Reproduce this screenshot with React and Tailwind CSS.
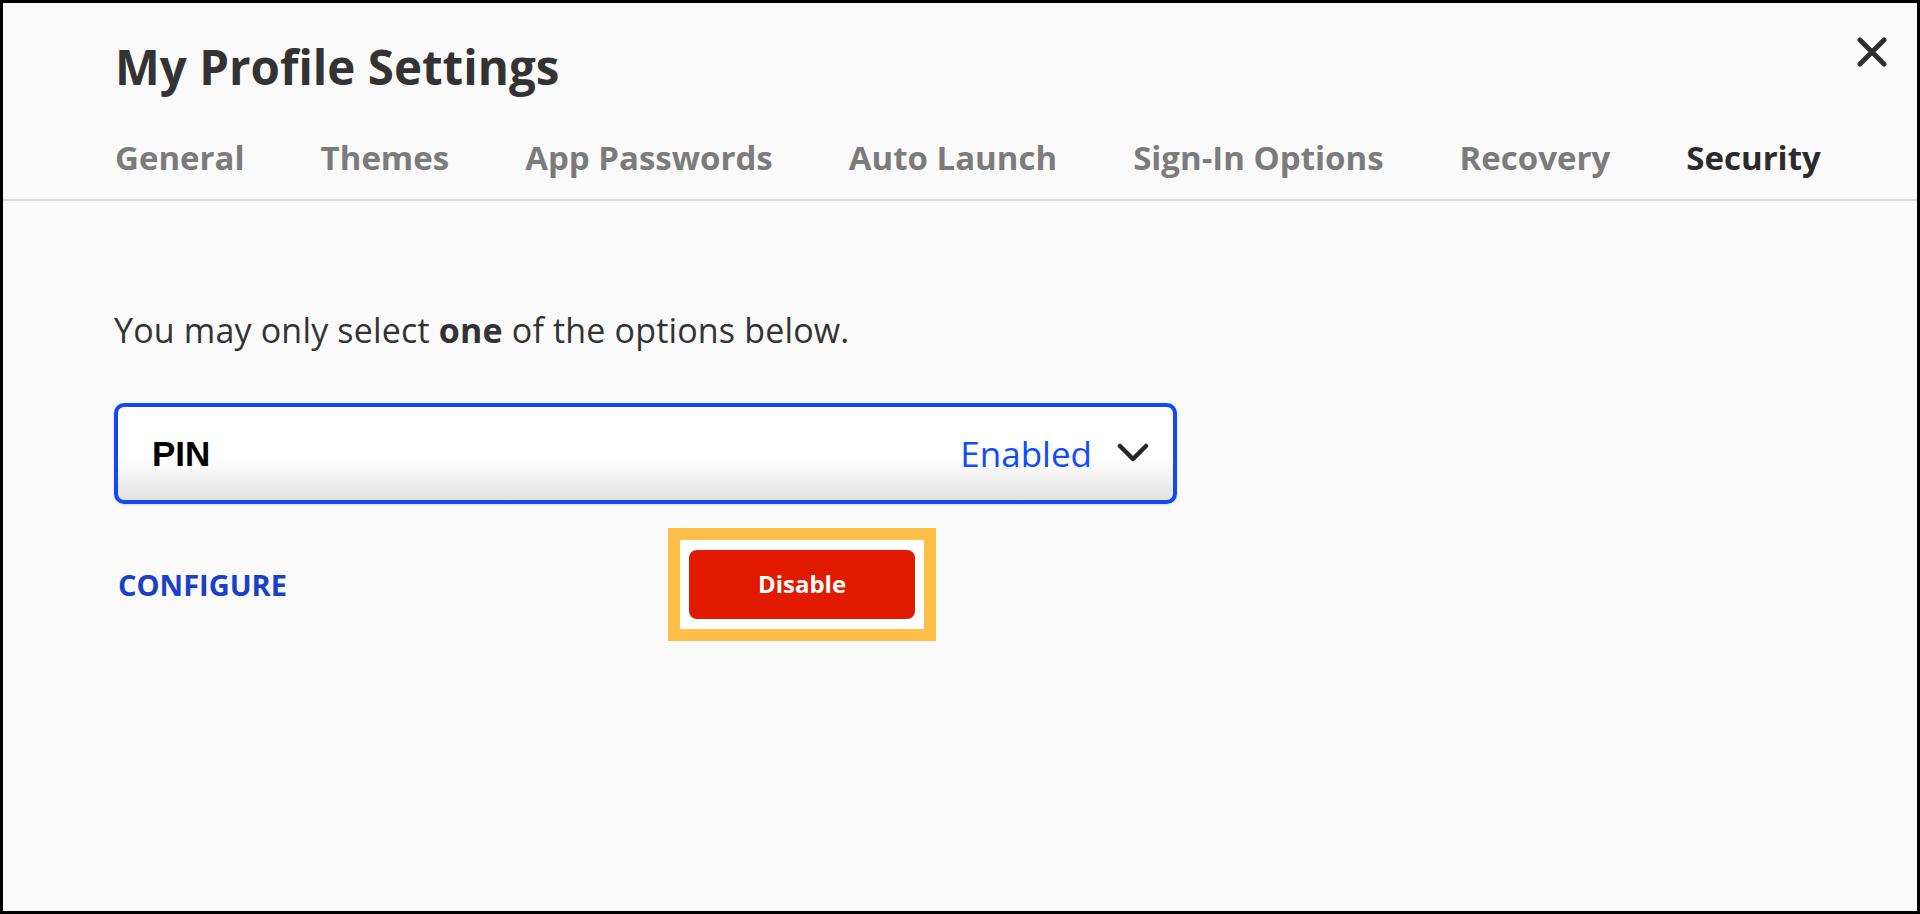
import React from "react";

const tabs = [
  "General",
  "Themes",
  "App Passwords",
  "Auto Launch",
  "Sign-In Options",
  "Recovery",
  "Security",
];

function CloseIcon() {
  return (
    <svg width="32" height="30" viewBox="0 0 32 30" fill="none">
      <path
        d="M4 3 L28 27 M28 3 L4 27"
        stroke="#2f2f2f"
        strokeWidth="5"
        strokeLinecap="round"
      />
    </svg>
  );
}

function Chevron() {
  return (
    <svg width="32" height="20" viewBox="0 0 32 20" fill="none">
      <path
        d="M3 3 L16 16 L29 3"
        stroke="#262626"
        strokeWidth="4.5"
        strokeLinecap="round"
        strokeLinejoin="round"
      />
    </svg>
  );
}

export default function App() {
  const active = "Security";

  return (
    <div className="relative flex h-[914px] w-full flex-col border-[3px] border-black bg-[#fafafa] font-['Open_Sans',sans-serif]">
      {/* Close */}
      <button className="absolute right-[29px] top-[34px]">
        <CloseIcon />
      </button>

      {/* Header */}
      <div className="border-b-2 border-[#d9d9d9] pl-[112px] pb-[25px]">
        <h1 className="mt-[40px] text-[47.5px] font-bold leading-none text-[#333333]">
          My Profile Settings
        </h1>
        <nav className="mt-[50px] flex gap-[76px]">
          {tabs.map((t) => (
            <span
              key={t}
              className={
                t === active
                  ? "text-[33px] font-bold leading-none text-[#2b2b2b]"
                  : "text-[33px] font-bold leading-none text-[#7b7b7b]"
              }
            >
              {t}
            </span>
          ))}
        </nav>
      </div>

      {/* Body */}
      <div className="pl-[111px]">
        <p className="mt-[112px] text-[34px] leading-none tracking-[0.005em] text-[#333333]">
          You may only select <span className="font-bold">one</span> of the
          options below.
        </p>

        <div className="mt-[56px] flex h-[101px] w-[1063px] items-center rounded-[10px] border-4 border-[#1149f8] bg-linear-to-b from-white from-55% to-[#e2e2e2] pl-[34px] pr-[24px] shadow-sm">
          <span className="font-['Liberation_Sans',Arial,sans-serif] text-[35px] font-bold leading-none text-black">
            PIN
          </span>
          <span className="ml-auto text-[35px] leading-none text-[#0f4cff]">
            Enabled
          </span>
          <span className="ml-[25px] flex items-center">
            <Chevron />
          </span>
        </div>

        <div className="mt-[24px] flex items-center">
          <span className="w-[554px] pl-[4px] text-[29px] font-bold leading-none text-[#1a40c8]">
            CONFIGURE
          </span>
          <div className="border-[12px] border-[#ffbe45] bg-white px-[9px] py-[10px]">
            <button className="flex h-[69px] w-[226px] items-center justify-center rounded-[8px] bg-[#e11a00] text-[24px] font-bold text-white">
              Disable
            </button>
          </div>
        </div>
      </div>
    </div>
  );
}
